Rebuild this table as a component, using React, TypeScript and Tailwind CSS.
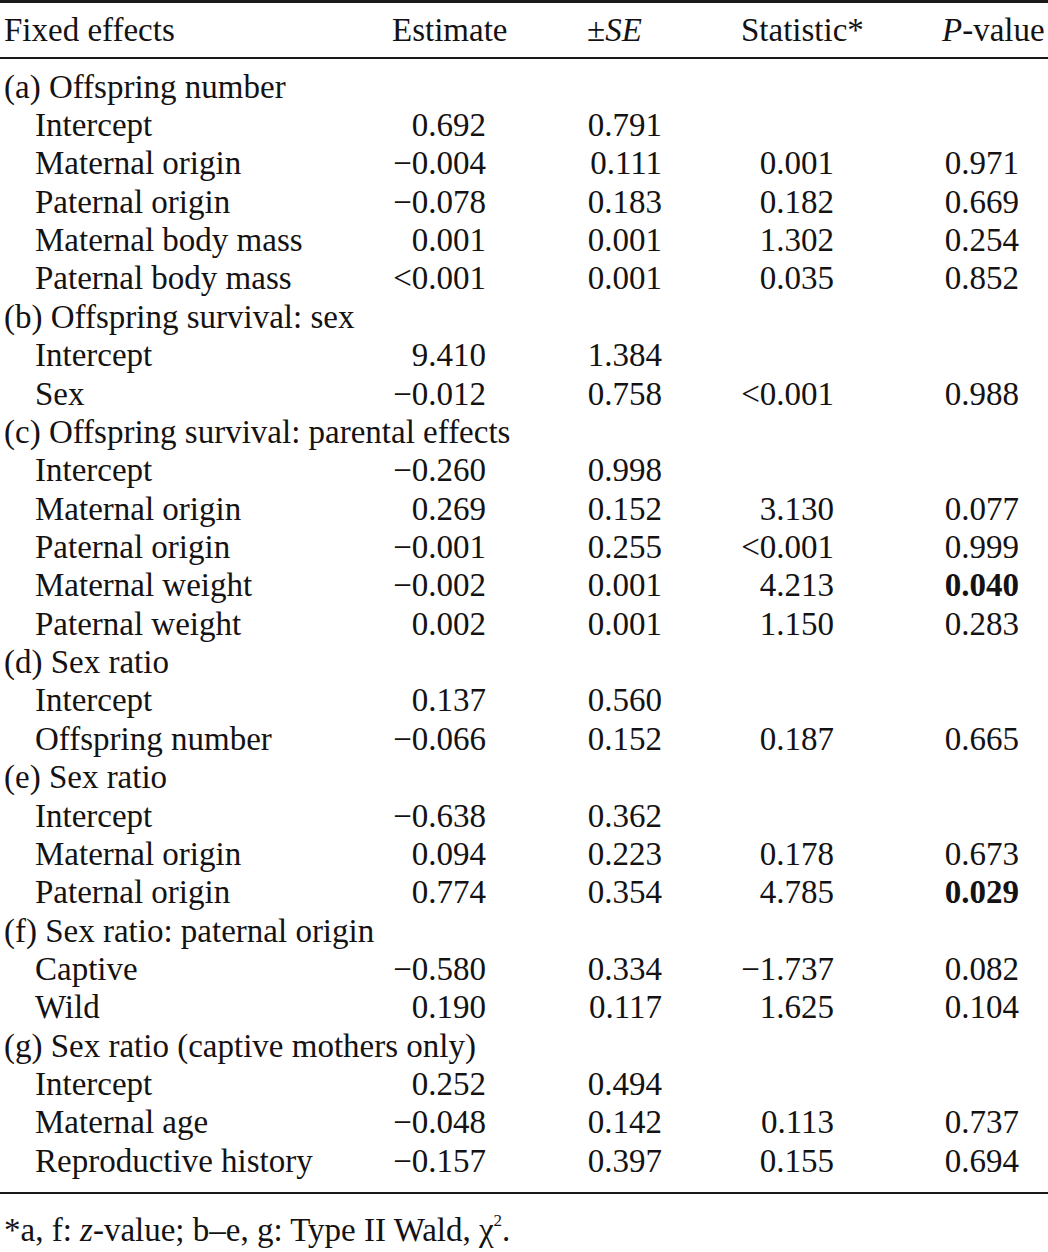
import React from "react";

type Row = { label: string; indent?: boolean; est?: string; se?: string; stat?: string; p?: string; bold?: boolean };

const rows: Row[] = [
  { label: "(a) Offspring number" },
  { label: "Intercept", indent: true, est: "0.692", se: "0.791" },
  { label: "Maternal origin", indent: true, est: "\u22120.004", se: "0.111", stat: "0.001", p: "0.971" },
  { label: "Paternal origin", indent: true, est: "\u22120.078", se: "0.183", stat: "0.182", p: "0.669" },
  { label: "Maternal body mass", indent: true, est: "0.001", se: "0.001", stat: "1.302", p: "0.254" },
  { label: "Paternal body mass", indent: true, est: "<0.001", se: "0.001", stat: "0.035", p: "0.852" },
  { label: "(b) Offspring survival: sex" },
  { label: "Intercept", indent: true, est: "9.410", se: "1.384" },
  { label: "Sex", indent: true, est: "\u22120.012", se: "0.758", stat: "<0.001", p: "0.988" },
  { label: "(c) Offspring survival: parental effects" },
  { label: "Intercept", indent: true, est: "\u22120.260", se: "0.998" },
  { label: "Maternal origin", indent: true, est: "0.269", se: "0.152", stat: "3.130", p: "0.077" },
  { label: "Paternal origin", indent: true, est: "\u22120.001", se: "0.255", stat: "<0.001", p: "0.999" },
  { label: "Maternal weight", indent: true, est: "\u22120.002", se: "0.001", stat: "4.213", p: "0.040", bold: true },
  { label: "Paternal weight", indent: true, est: "0.002", se: "0.001", stat: "1.150", p: "0.283" },
  { label: "(d) Sex ratio" },
  { label: "Intercept", indent: true, est: "0.137", se: "0.560" },
  { label: "Offspring number", indent: true, est: "\u22120.066", se: "0.152", stat: "0.187", p: "0.665" },
  { label: "(e) Sex ratio" },
  { label: "Intercept", indent: true, est: "\u22120.638", se: "0.362" },
  { label: "Maternal origin", indent: true, est: "0.094", se: "0.223", stat: "0.178", p: "0.673" },
  { label: "Paternal origin", indent: true, est: "0.774", se: "0.354", stat: "4.785", p: "0.029", bold: true },
  { label: "(f) Sex ratio: paternal origin" },
  { label: "Captive", indent: true, est: "\u22120.580", se: "0.334", stat: "\u22121.737", p: "0.082" },
  { label: "Wild", indent: true, est: "0.190", se: "0.117", stat: "1.625", p: "0.104" },
  { label: "(g) Sex ratio (captive mothers only)" },
  { label: "Intercept", indent: true, est: "0.252", se: "0.494" },
  { label: "Maternal age", indent: true, est: "\u22120.048", se: "0.142", stat: "0.113", p: "0.737" },
  { label: "Reproductive history", indent: true, est: "\u22120.157", se: "0.397", stat: "0.155", p: "0.694" },
];

export default function App() {
  return (
    <div
      className="w-[1048px] h-[1252px] bg-white text-[#141213] overflow-hidden"
      style={{ fontFamily: '"Liberation Serif", "Times New Roman", serif' }}
    >
      <div className="h-[3px] bg-[#1a1818]" />
      <div className="grid grid-cols-[392px_195px_154px_201px_1fr] h-[54px] items-center text-[33px] leading-none whitespace-nowrap">
        <div className="pl-[4px]">Fixed effects</div>
        <div>Estimate</div>
        <div>
          ±<i>SE</i>
        </div>
        <div>Statistic*</div>
        <div>
          <i>P</i>-value
        </div>
      </div>
      <div className="h-[2px] bg-[#1a1818]" />
      <div className="pt-[9px] pb-[12px]">
        {rows.map((r, i) => (
          <div
            key={i}
            className="grid grid-cols-[380px_106px_176px_172px_185px] h-[38.36px] items-center text-[33px] leading-none whitespace-nowrap"
          >
            <div className={r.indent ? "pl-[35px]" : "pl-[4px]"}>{r.label}</div>
            <div className="text-right">{r.est ?? ""}</div>
            <div className="text-right">{r.se ?? ""}</div>
            <div className="text-right">{r.stat ?? ""}</div>
            <div className={r.bold ? "text-right font-bold" : "text-right"}>{r.p ?? ""}</div>
          </div>
        ))}
      </div>
      <div className="h-[2px] bg-[#1a1818]" />
      <div className="pl-[4px] pt-[20px] text-[33px] leading-none whitespace-nowrap">
        *a, f: <i>z</i>-value; b–e, g: Type II Wald, χ<sup className="text-[17px] relative -top-[15px]">2</sup>.
      </div>
    </div>
  );
}
